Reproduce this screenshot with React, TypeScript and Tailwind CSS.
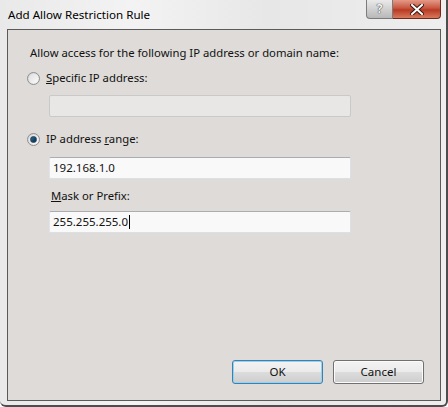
import React from 'react'

const font = { fontFamily: '"Segoe UI", "Noto Sans", "Open Sans", sans-serif' }

function Radio({ checked }: { checked?: boolean }) {
  return (
    <span className="relative flex h-[13px] w-[13px] shrink-0 items-center justify-center rounded-full border border-[#8e8f8f] bg-gradient-to-br from-[#d2d2d2] to-[#f4f4f4]">
      <span className="h-[9px] w-[9px] rounded-full bg-gradient-to-br from-[#e0e0e0] to-[#fafafa]" />
      {checked && (
        <span className="absolute h-[7px] w-[7px] rounded-full border border-[#1b3f5c] bg-gradient-to-br from-[#2d6d93] to-[#0d2b44]" />
      )}
    </span>
  )
}

function TextBox({ value, disabled, caret }: { value?: string; disabled?: boolean; caret?: boolean }) {
  return (
    <div
      className={
        disabled
          ? 'ml-[41px] h-[22px] w-[302px] rounded-[2px] border border-[#c9c9c9] bg-[#e9e7e5]'
          : 'ml-[41px] flex h-[22px] w-[302px] items-center rounded-[2px] border border-[#abadb3] border-b-[#dbdfe6] border-l-[#e2e3ea] border-r-[#dbdfe6] bg-[#f9f9f9] px-[3px] text-[11.5px] text-[#111]'
      }
    >
      {value}
      {caret && <span className="ml-[1px] inline-block h-[14px] w-[1px] bg-black" />}
    </div>
  )
}

function Button({ label, primary }: { label: string; primary?: boolean }) {
  return (
    <button
      className={
        'h-[24px] w-[91px] rounded-[3px] border bg-[linear-gradient(#f3f3f3_0%,#ebebeb_48%,#dcdcdc_52%,#cdcdcd_100%)] text-[11.5px] text-[#111] ' +
        (primary ? 'border-[#3c7fb1] shadow-[inset_0_0_0_1px_#98d1ef]' : 'border-[#707070] shadow-[inset_0_0_0_1px_#fbfbfb]')
      }
    >
      {label}
    </button>
  )
}

export default function App() {
  return (
    <div
      className="flex h-[407px] w-[448px] flex-col overflow-hidden rounded-b-[6px] border-r-[2px] border-b-[2px] border-[#4d4d4d] bg-[linear-gradient(90deg,#e9e9e9,#f3f3f3_30%,#e7e7e7_60%,#eeeeee)]"
      style={font}
    >
      <div className="flex h-[29px] shrink-0 items-start">
        <span className="pl-[8px] pt-[7px] text-[11.6px] leading-[16px] text-black">Add Allow Restriction Rule</span>
        <div className="ml-auto mr-[5px] flex">
          <div className="flex h-[19px] w-[27px] items-center justify-center rounded-bl-[4px] border border-t-0 border-[#7b7b7b] bg-gradient-to-b from-[#eaeaea] to-[#b8b8b8] text-[12px] font-bold leading-none text-[#f5f5f5] [text-shadow:0_0_1px_#333,0_0_1px_#333]">
            ?
          </div>
          <div className="flex h-[19px] w-[48px] items-center justify-center rounded-br-[4px] border border-l-0 border-t-0 border-[#6b2a22] bg-[linear-gradient(#e49a89,#c8563f_45%,#b83a24_55%,#d77a5c)]">
            <svg width="14" height="11" viewBox="0 0 14 11">
              <path d="M2 1 L12 10 M12 1 L2 10" stroke="#3b1a14" strokeWidth="4" strokeLinecap="square" />
              <path d="M2 1 L12 10 M12 1 L2 10" stroke="#ffffff" strokeWidth="2" strokeLinecap="square" />
            </svg>
          </div>
        </div>
      </div>

      <div className="ml-[7px] mr-[5px] mb-[4px] flex flex-1 flex-col border border-[#5a5a5a] bg-[#dedbd8] text-[11.3px] text-[#111]">
        <div className="ml-[22px] mt-[15px] leading-[16px]">Allow access for the following IP address or domain name:</div>

        <div className="ml-[19px] mt-[9px] flex items-center gap-[6px] leading-[16px]">
          <Radio />
          <span>
            <u>S</u>pecific IP address:
          </span>
        </div>
        <div className="mt-[9px]">
          <TextBox disabled />
        </div>

        <div className="ml-[19px] mt-[14px] flex items-center gap-[6px] leading-[16px]">
          <Radio checked />
          <span>
            IP address <u>r</u>ange:
          </span>
        </div>
        <div className="mt-[10px]">
          <TextBox value="192.168.1.0" />
        </div>
        <div className="ml-[43px] mt-[9px] leading-[16px]">
          <u>M</u>ask or Prefix:
        </div>
        <div className="mt-[7px]">
          <TextBox value="255.255.255.0" caret />
        </div>

        <div className="mt-auto mb-[16px] mr-[16px] flex justify-end gap-[10px]">
          <Button label="OK" primary />
          <Button label="Cancel" />
        </div>
      </div>
    </div>
  )
}
